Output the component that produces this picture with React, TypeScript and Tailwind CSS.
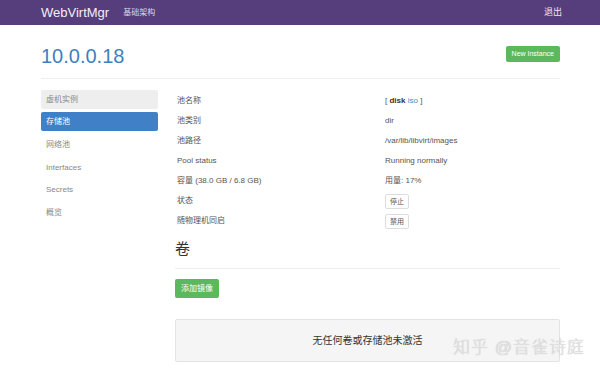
export default function App() {
  const rows: [string, React.ReactNode][] = [
    ['池名称', <span>[ <b className="font-bold text-[#333]">disk</b> <span className="text-[#428bca]">iso</span> ]</span>],
    ['池类别', 'dir'],
    ['池路径', '/var/lib/libvirt/images'],
    ['Pool status', 'Running normally'],
    ['容量 (38.0 GB / 6.8 GB)', '用量: 17%'],
    ['状态', <span className="inline-block rounded-[2px] border border-[#ddd] bg-white px-[4px] text-[7px] leading-[13px]">停止</span>],
    ['随物理机同启', <span className="inline-block rounded-[2px] border border-[#ddd] bg-white px-[4px] text-[7px] leading-[13px]">禁用</span>],
  ]

  return (
    <div className="relative h-[372px] w-[600px] overflow-hidden bg-white font-['Liberation_Sans','Noto_Sans_CJK_SC',sans-serif] text-[#333]">
      <nav className="flex h-[25px] items-center bg-[#563d7c] px-[41px] text-white">
        <span className="text-[13px] text-[#f2eef8]">WebVirtMgr</span>
        <span className="ml-[14px] text-[8px] text-[#ddd5ea]">基础架构</span>
        <span className="ml-auto mr-[-3px] text-[9px] text-[#eee8f5]">退出</span>
      </nav>

      <div className="mx-[41px] w-[519px]">
        <div className="flex h-[54px] items-end justify-between border-b border-[#eee] pb-[10px]">
          <h1 className="text-[20px] leading-[24px] text-[#3d7fc1]">10.0.0.18</h1>
          <button className="mb-[6px] rounded-[2px] bg-[#5cb85c] px-[6px] text-[7px] leading-[16px] text-white">New Instance</button>
        </div>

        <div className="mt-[11px] flex">
          <ul className="w-[117px] text-[8px] leading-[19px]">
            <li className="rounded-[2px] bg-[#eee] px-[5px] text-[#888]">虚机实例</li>
            <li className="mt-[3px] rounded-[2px] bg-[#3f80c6] px-[5px] text-white">存储池</li>
            <li className="mt-[4px] px-[5px] text-[#888]">网络池</li>
            <li className="mt-[4px] px-[5px] text-[#888]">Interfaces</li>
            <li className="mt-[3px] px-[5px] text-[#888]">Secrets</li>
            <li className="mt-[4px] px-[5px] text-[#888]">概览</li>
          </ul>

          <div className="ml-[17px] flex-1">
            <div className="mt-[1px] text-[8px] text-[#555]">
              {rows.map(([k, v]) => (
                <div key={k} className="flex h-[20px] items-center px-[2px]">
                  <span className="w-[208px]">{k}</span>
                  <span>{v}</span>
                </div>
              ))}
            </div>

            <h2 className="mt-[8px] border-b border-[#eee] pb-[9px] text-[15px] leading-[20px] text-[#333]">卷</h2>
            <button className="mt-[10px] rounded-[2px] bg-[#5cb85c] px-[6px] text-[8px] leading-[19px] text-white">添加镜像</button>

            <div className="mt-[21px] flex h-[43px] items-center justify-center rounded-[2px] border border-[#e3e3e3] bg-[#f5f5f5] text-[10px] text-[#333]">
              无任何卷或存储池未激活
            </div>
          </div>
        </div>
      </div>

      <div className="absolute left-[453px] top-[338px] text-[17px] font-light leading-[20px] tracking-[1px] text-[#e4e4e4] [text-shadow:0_0_1px_#b5b5b5]">
        知乎 @音雀诗庭
      </div>
    </div>
  )
}
